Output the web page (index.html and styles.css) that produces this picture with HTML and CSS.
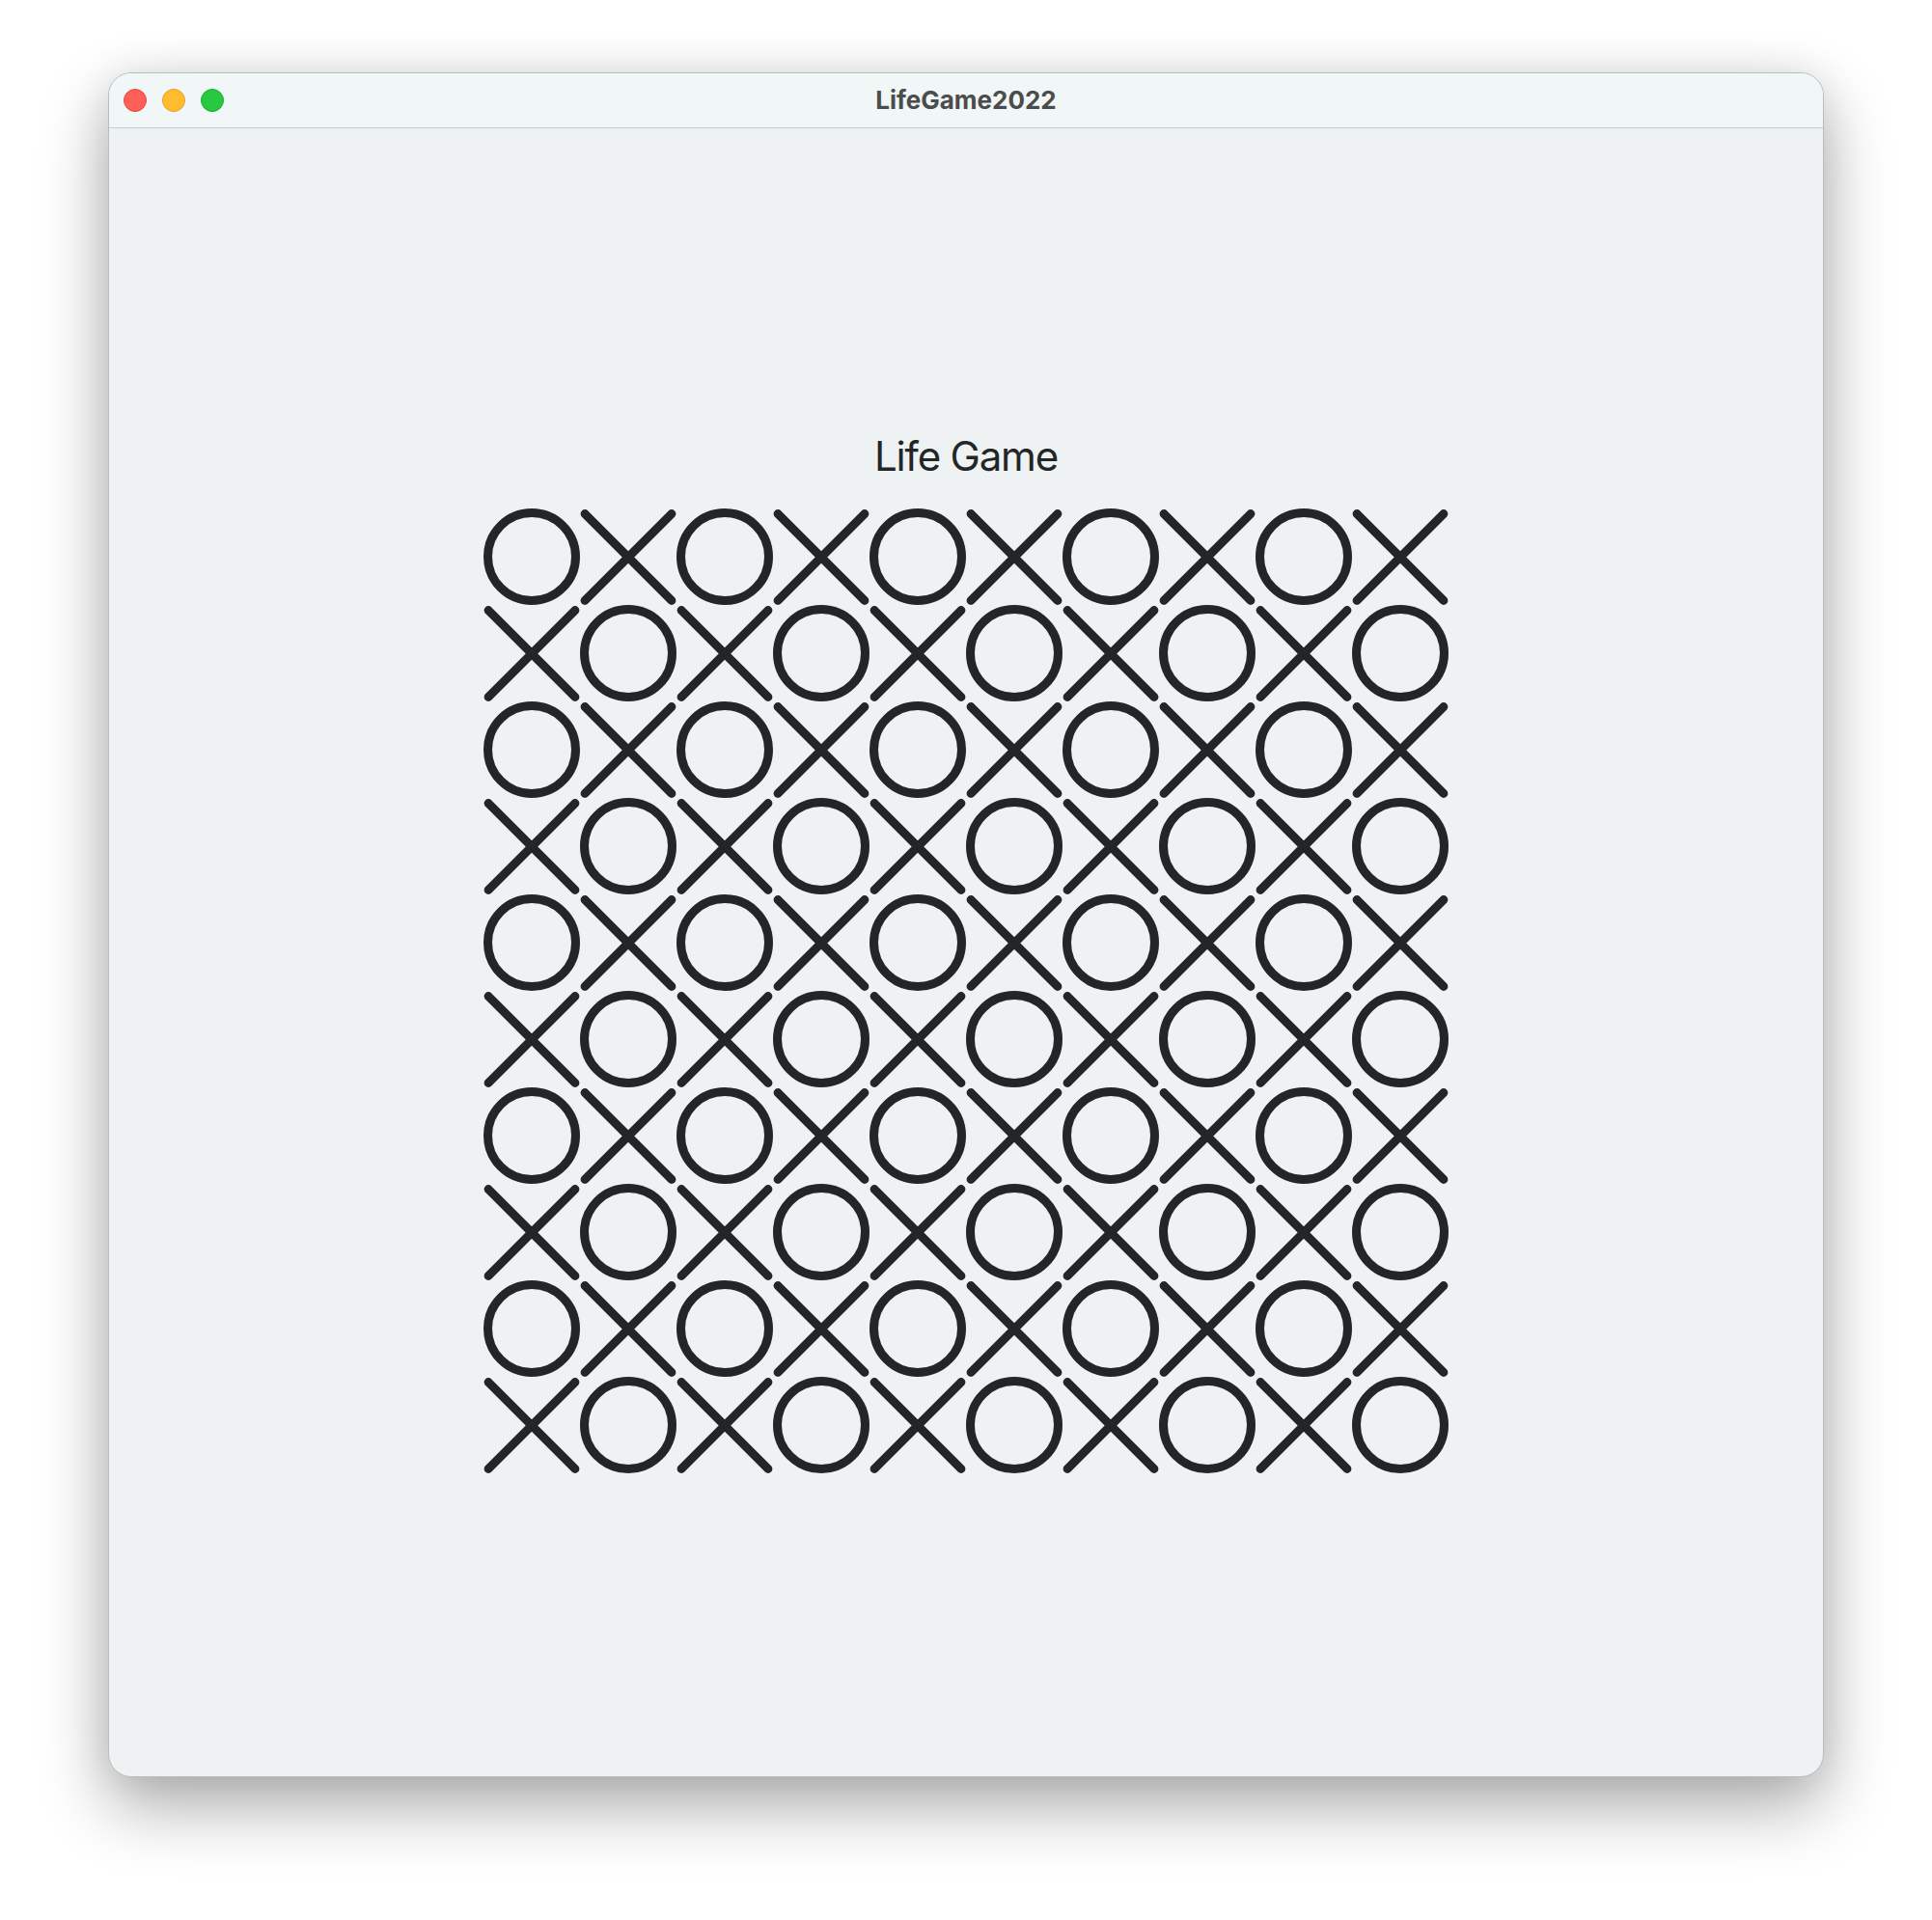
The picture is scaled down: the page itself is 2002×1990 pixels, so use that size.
FILE: index.html
```html
<!DOCTYPE html>
<html>
<head>
<meta charset="utf-8">
<title>LifeGame2022</title>
<link rel="stylesheet" href="styles.css">
</head>
<body>
<div class="window">
  <div class="titlebar">
    <div class="lights">
      <span class="light red"></span>
      <span class="light yellow"></span>
      <span class="light green"></span>
    </div>
    <div class="wtitle">LifeGame2022</div>
  </div>
  <div class="content">
    <h1 class="heading">Life Game</h1>
    <div class="grid">
      <div class="o"></div><div class="x"></div><div class="o"></div><div class="x"></div><div class="o"></div><div class="x"></div><div class="o"></div><div class="x"></div><div class="o"></div><div class="x"></div>
      <div class="x"></div><div class="o"></div><div class="x"></div><div class="o"></div><div class="x"></div><div class="o"></div><div class="x"></div><div class="o"></div><div class="x"></div><div class="o"></div>
      <div class="o"></div><div class="x"></div><div class="o"></div><div class="x"></div><div class="o"></div><div class="x"></div><div class="o"></div><div class="x"></div><div class="o"></div><div class="x"></div>
      <div class="x"></div><div class="o"></div><div class="x"></div><div class="o"></div><div class="x"></div><div class="o"></div><div class="x"></div><div class="o"></div><div class="x"></div><div class="o"></div>
      <div class="o"></div><div class="x"></div><div class="o"></div><div class="x"></div><div class="o"></div><div class="x"></div><div class="o"></div><div class="x"></div><div class="o"></div><div class="x"></div>
      <div class="x"></div><div class="o"></div><div class="x"></div><div class="o"></div><div class="x"></div><div class="o"></div><div class="x"></div><div class="o"></div><div class="x"></div><div class="o"></div>
      <div class="o"></div><div class="x"></div><div class="o"></div><div class="x"></div><div class="o"></div><div class="x"></div><div class="o"></div><div class="x"></div><div class="o"></div><div class="x"></div>
      <div class="x"></div><div class="o"></div><div class="x"></div><div class="o"></div><div class="x"></div><div class="o"></div><div class="x"></div><div class="o"></div><div class="x"></div><div class="o"></div>
      <div class="o"></div><div class="x"></div><div class="o"></div><div class="x"></div><div class="o"></div><div class="x"></div><div class="o"></div><div class="x"></div><div class="o"></div><div class="x"></div>
      <div class="x"></div><div class="o"></div><div class="x"></div><div class="o"></div><div class="x"></div><div class="o"></div><div class="x"></div><div class="o"></div><div class="x"></div><div class="o"></div>
    </div>
  </div>
</div>
</body>
</html>
```

FILE: styles.css
```css
html, body {
  margin: 0;
  padding: 0;
  background: #ffffff;
}
body {
  width: 2002px;
  height: 1990px;
  overflow: hidden;
  font-family: Inter, "Noto Sans", sans-serif;
}
.window {
  margin: 75px 0 0 112px;
  width: 1778px;
  height: 1767px;
  box-sizing: border-box;
  border-radius: 24px;
  background: #eef2f3;
  border: 1px solid #b9bcbd;
  box-shadow: 0 30px 70px rgba(0, 0, 0, 0.33), 0 0 40px rgba(0, 0, 0, 0.08);
  overflow: hidden;
  display: flex;
  flex-direction: column;
}
.titlebar {
  height: 56px;
  flex: none;
  background: #f1f6f7;
  border-bottom: 1px solid #c9cccd;
  position: relative;
  display: flex;
  align-items: center;
  justify-content: center;
}
.lights {
  position: absolute;
  left: 15px;
  top: 16px;
  display: flex;
  gap: 16px;
}
.light {
  width: 24px;
  height: 24px;
  border-radius: 50%;
  box-sizing: border-box;
}
.red { background: #fe5f57; border: 1px solid #e1483f; }
.yellow { background: #febc2e; border: 1px solid #dea123; }
.green { background: #28c840; border: 1px solid #1dab2f; }
.wtitle {
  font-size: 26px;
  font-weight: 700;
  color: #4b4c4c;
  line-height: 30px;
}
.content {
  flex: 1;
  display: flex;
  flex-direction: column;
  align-items: center;
  justify-content: center;
}
.heading {
  margin: 0 0 28px 0;
  font-size: 42px;
  line-height: 52px;
  font-weight: 400;
  letter-spacing: -1.2px;
  color: #232626;
}
.grid {
  display: grid;
  grid-template-columns: repeat(10, 100px);
  grid-template-rows: repeat(10, 100px);
}
.o {
  width: 100px;
  height: 100px;
  box-sizing: border-box;
  border: 9px solid #232626;
  border-radius: 50%;
}
.x {
  position: relative;
  width: 100px;
  height: 100px;
}
.x::before, .x::after {
  content: "";
  position: absolute;
  left: 50%;
  top: 50%;
  width: 136px;
  height: 9px;
  margin: -4.5px 0 0 -68px;
  border-radius: 4.5px;
  background: #232626;
}
.x::before { transform: rotate(45deg); }
.x::after { transform: rotate(-45deg); }
```
